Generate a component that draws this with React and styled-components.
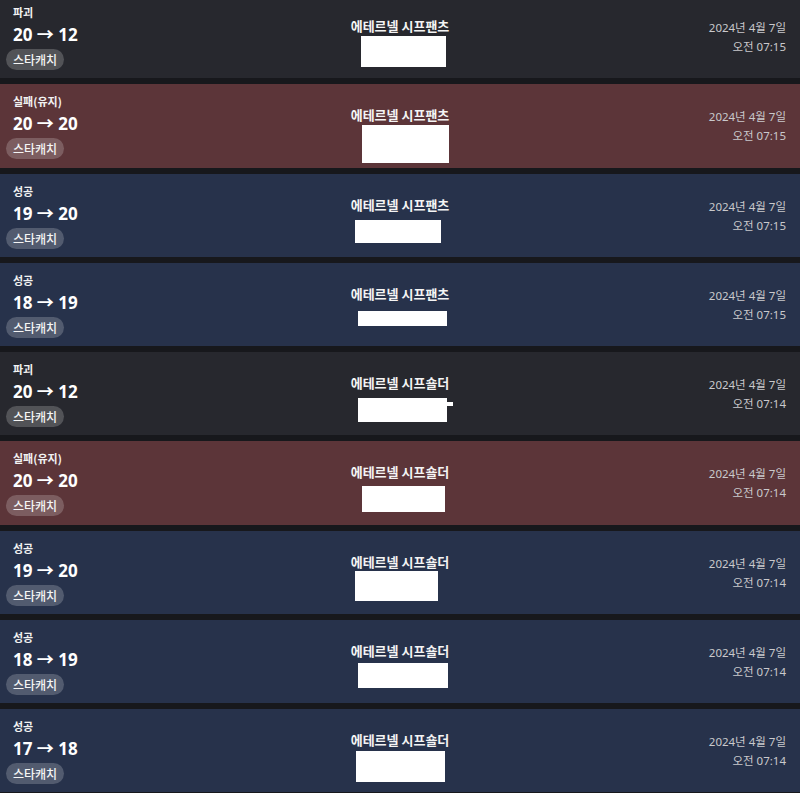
import React from 'react';
import styled, { createGlobalStyle } from 'styled-components';

const GlobalStyle = createGlobalStyle`
  html, body {
    margin: 0;
    padding: 0;
    background: #17181c;
  }
  body {
    font-family: "Noto Sans", "Noto Sans CJK KR", sans-serif;
    color: #ffffff;
  }
`;

const ROW_BG = {
  destroy: '#27282e',
  fail: '#5c3539',
  success: '#27324b',
};

const List = styled.div`
  display: flex;
  flex-direction: column;
  gap: 6px;
  margin-top: -5px;
  padding-bottom: 2px;
`;

const Row = styled.div`
  display: grid;
  grid-template-columns: 1fr auto 1fr;
  height: 83.25px;
  box-sizing: border-box;
  background: ${(p) => ROW_BG[p.$kind]};
`;

const Left = styled.div`
  display: flex;
  flex-direction: column;
  align-items: flex-start;
  padding: 9px 0 0 13px;
`;

const Result = styled.div`
  font-family: "Noto Sans CJK KR", sans-serif;
  font-size: 11px;
  font-weight: 700;
  line-height: 16px;
  color: #f2f2f2;
`;

const Stars = styled.div`
  font-size: 17px;
  font-weight: 700;
  line-height: 24px;
  margin-top: 3px;
`;

const Chip = styled.span`
  margin: 2px 0 0 -7px;
  height: 21px;
  padding: 0 7px;
  border-radius: 10.5px;
  background: rgba(255, 255, 255, 0.2);
  font-family: "Noto Sans CJK KR", sans-serif;
  font-size: 12px;
  font-weight: 500;
  line-height: 21px;
  color: #f5f5f5;
`;

const Center = styled.div`
  display: flex;
  flex-direction: column;
  align-items: center;
  padding-top: 22px;
`;

const Title = styled.div`
  font-family: "Noto Sans CJK KR", sans-serif;
  font-size: 13px;
  font-weight: 700;
  line-height: 18px;
  color: #f4f4f4;
`;

const Redact = styled.div`
  position: relative;
  width: ${(p) => p.$w}px;
  height: ${(p) => p.$h}px;
  margin-top: ${(p) => p.$top}px;
  transform: translateX(${(p) => p.$dx}px);
  background: #ffffff;
`;

const Nub = styled.span`
  position: absolute;
  left: 100%;
  top: 4px;
  width: 6px;
  height: 4px;
  background: #ffffff;
`;

const Right = styled.div`
  display: flex;
  flex-direction: column;
  align-items: flex-end;
  padding: 23px 14px 0 0;
  font-family: "Noto Sans", "Noto Sans CJK KR", sans-serif;
  font-size: 11.5px;
  line-height: 19px;
  color: #c9c9cc;
`;

const rows = [
  { kind: 'destroy', result: '파괴', from: 20, to: 12, item: '에테르넬 시프팬츠', time: '07:15', box: { w: 85, h: 31, top: 1, dx: 4 } },
  { kind: 'fail', result: '실패(유지)', from: 20, to: 20, item: '에테르넬 시프팬츠', time: '07:15', box: { w: 87, h: 38, top: 1, dx: 6 } },
  { kind: 'success', result: '성공', from: 19, to: 20, item: '에테르넬 시프팬츠', time: '07:15', box: { w: 86, h: 23, top: 6, dx: -2 } },
  { kind: 'success', result: '성공', from: 18, to: 19, item: '에테르넬 시프팬츠', time: '07:15', box: { w: 89, h: 15, top: 8, dx: 3 } },
  { kind: 'destroy', result: '파괴', from: 20, to: 12, item: '에테르넬 시프숄더', time: '07:14', box: { w: 89, h: 24, top: 6, dx: 3, nub: true } },
  { kind: 'fail', result: '실패(유지)', from: 20, to: 20, item: '에테르넬 시프숄더', time: '07:14', box: { w: 83, h: 26, top: 5, dx: 4 } },
  { kind: 'success', result: '성공', from: 19, to: 20, item: '에테르넬 시프숄더', time: '07:14', box: { w: 83, h: 30, top: 0, dx: -3 } },
  { kind: 'success', result: '성공', from: 18, to: 19, item: '에테르넬 시프숄더', time: '07:14', box: { w: 90, h: 25, top: 3, dx: 3 } },
  { kind: 'success', result: '성공', from: 17, to: 18, item: '에테르넬 시프숄더', time: '07:14', box: { w: 89, h: 31, top: 2, dx: 1 } },
];

function HistoryRow({ row }) {
  const { box } = row;
  return (
    <Row $kind={row.kind}>
      <Left>
        <Result>{row.result}</Result>
        <Stars>{row.from} → {row.to}</Stars>
        <Chip>스타캐치</Chip>
      </Left>
      <Center>
        <Title>{row.item}</Title>
        <Redact $w={box.w} $h={box.h} $top={box.top} $dx={box.dx}>
          {box.nub && <Nub />}
        </Redact>
      </Center>
      <Right>
        <span>2024년 4월 7일</span>
        <span>오전 {row.time}</span>
      </Right>
    </Row>
  );
}

export default function App() {
  return (
    <>
      <GlobalStyle />
      <List>
        {rows.map((row, i) => (
          <HistoryRow key={i} row={row} />
        ))}
      </List>
    </>
  );
}
